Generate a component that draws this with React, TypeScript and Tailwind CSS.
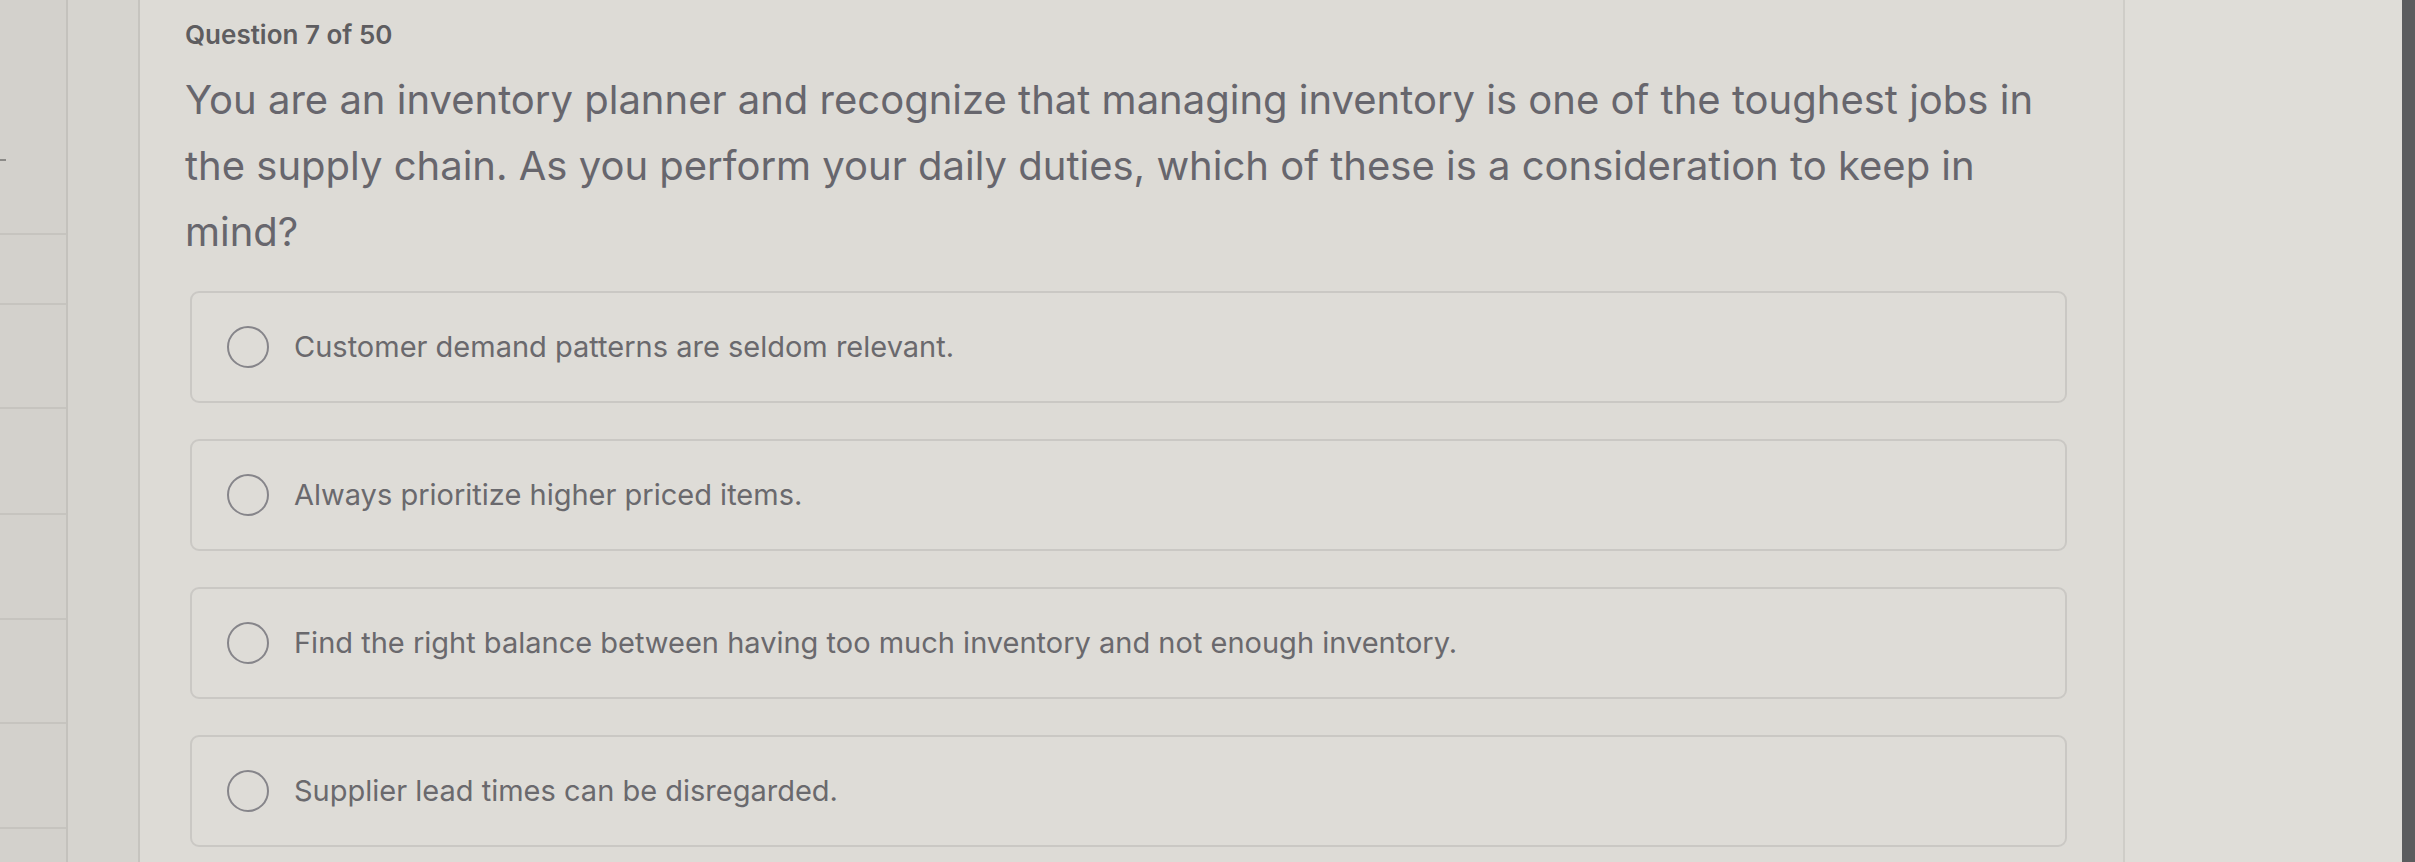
import React from "react";

const OPTIONS = [
  "Customer demand patterns are seldom relevant.",
  "Always prioritize higher priced items.",
  "Find the right balance between having too much inventory and not enough inventory.",
  "Supplier lead times can be disregarded.",
];

const SIDE_ROWS = [235, 70, 104, 106, 105, 104, 105];

export default function App() {
  return (
    <div
      className="flex h-[862px] w-[2415px] overflow-hidden bg-[#dcdad5]"
      style={{ fontFamily: "Inter, 'Noto Sans', sans-serif" }}
    >
      {/* left nav strip */}
      <div className="flex w-[68px] shrink-0 flex-col border-r-2 border-[#c4c2bd] bg-[#d3d1cc]">
        {SIDE_ROWS.map((h, i) => (
          <div
            key={i}
            className="relative shrink-0 border-b-2 border-[#c6c4bf]"
            style={{ height: h }}
          >
            {i === 0 && (
              <div className="absolute left-0 top-[159px] h-[2px] w-[6px] bg-[#8c8b88]" />
            )}
          </div>
        ))}
      </div>

      {/* second strip */}
      <div className="w-[72px] shrink-0 border-r-2 border-[#c6c4bf] bg-[#d6d4cf]" />

      {/* main question panel */}
      <main className="flex-1 border-r-2 border-[#cfcdc8] bg-[#dddbd6] pl-[45px] pr-[56px] pt-[20px]">
        <div className="text-[26px] font-semibold leading-[30px] text-[#5e5d60]">
          Question 7 of 50
        </div>
        <p className="mt-[17px] whitespace-nowrap text-[40px] leading-[66px] text-[#67666d]">
          You are an inventory planner and recognize that managing inventory is one of the toughest jobs in
          <br />
          the supply chain. As you perform your daily duties, which of these is a consideration to keep in
          <br />
          mind?
        </p>

        <div className="mt-[26px] ml-[5px] flex flex-col gap-[36px]">
          {OPTIONS.map((opt) => (
            <label
              key={opt}
              className="flex h-[112px] items-center gap-[25px] rounded-[9px] border-2 border-[#cac8c4] bg-[#dedcd7] pl-[35px]"
            >
              <span className="h-[42px] w-[42px] shrink-0 rounded-full border-2 border-[#86858a]" />
              <span className="text-[29px] text-[#6a696d]">{opt}</span>
            </label>
          ))}
        </div>
      </main>

      {/* right blank area */}
      <div className="w-[277px] shrink-0 bg-[#dfddd8]" />
      <div className="w-[13px] shrink-0 bg-[#5b5c5e]" />
    </div>
  );
}
